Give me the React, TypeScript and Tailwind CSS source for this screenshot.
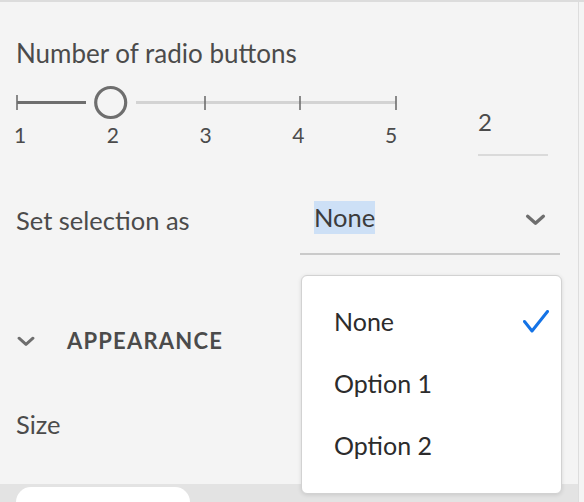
import { useState } from 'react';

const font = { fontFamily: 'Lato, "Open Sans", sans-serif' };

const Chevron = ({ className }: { className?: string }) => (
  <svg viewBox="0 0 22 13" className={className} fill="none">
    <path d="M2.5 2.5 L11 10 L19.5 2.5" stroke="#6e6e6e" strokeWidth="3.6" strokeLinecap="round" strokeLinejoin="round" />
  </svg>
);

const Slider = () => (
  <div className="w-[384px]">
    <svg width="384" height="30" className="overflow-visible block">
      <line x1="1" y1="7" x2="1" y2="22" stroke="#6e6e6e" strokeWidth="1.6" />
      <line x1="1" y1="14.5" x2="70" y2="14.5" stroke="#6e6e6e" strokeWidth="3" />
      <circle cx="94.7" cy="14.5" r="15" fill="none" stroke="#6e6e6e" strokeWidth="3.2" />
      <line x1="120" y1="14.5" x2="380" y2="14.5" stroke="#d3d3d3" strokeWidth="3" />
      <line x1="189" y1="8" x2="189" y2="22" stroke="#6e6e6e" strokeWidth="1.6" />
      <line x1="284" y1="8" x2="284" y2="22" stroke="#6e6e6e" strokeWidth="1.6" />
      <line x1="380" y1="8" x2="380" y2="22" stroke="#6e6e6e" strokeWidth="1.6" />
    </svg>
    <div className="mt-[4px] -ml-[2px] w-[383px] flex justify-between text-[21px] leading-[25px] text-[#4b4b4b]">
      {[1, 2, 3, 4, 5].map((n) => (
        <span key={n} className="w-[12px] text-center">{n}</span>
      ))}
    </div>
  </div>
);

const options = ['None', 'Option 1', 'Option 2'];

export default function App() {
  const [selected, setSelected] = useState('None');

  return (
    <div style={font} className="relative w-[584px] h-[502px] overflow-hidden bg-[#f4f4f4] border-t-2 border-[#dcdcdc]">
      <div className="w-[579px] h-full border-r border-[#dddddd] flex flex-col">
        {/* Field section */}
        <div className="px-4">
          <p className="mt-[36px] text-[26px] leading-[30px] text-[#4b4b4b]">Number of radio buttons</p>

          <div className="mt-[20px] flex items-start">
            <Slider />
            <div className="ml-[78px] mt-[19px] w-[70px] pb-[17px] border-b-2 border-[#dadada]">
              <span className="text-[24px] leading-[29px] text-[#4b4b4b]">2</span>
            </div>
          </div>

          <div className="mt-[35px] flex items-start">
            <p className="w-[284px] mt-[14px] text-[25.5px] leading-[30px] text-[#4b4b4b]">Set selection as</p>
            <div className="w-[260px] flex items-start justify-between pl-[14px] pr-[14px] pt-[10px] pb-[19px] border-b-2 border-[#cacaca]">
              <span className="inline-block h-[33px] leading-[33px] bg-[#cde0f6] text-[25.5px] text-[#3c3c3c]">{selected}</span>
              <Chevron className="w-[21px] h-[12px] mt-[13px]" />
            </div>
          </div>
        </div>

        <div className="mt-[31px] h-[3px] bg-[#e2e2e2]" />

        {/* Appearance section */}
        <div className="px-4">
          <div className="mt-[42px] flex items-center">
            <Chevron className="w-[18px] h-[11px] ml-[1px]" />
            <span className="ml-[32px] text-[22px] leading-[26px] font-bold tracking-[1.2px] text-[#4b4b4b]">APPEARANCE</span>
          </div>
          <p className="mt-[55px] text-[25.5px] leading-[30px] text-[#4b4b4b]">Size</p>
        </div>

        <div className="mt-[45px] flex-1 bg-[#e3e3e3] pt-[3px] pl-4">
          <div className="w-[174px] h-[30px] rounded-[16px] bg-white" />
        </div>
      </div>

      {/* Open dropdown menu */}
      <div className="absolute left-[301px] top-[273px] w-[261px] pt-[14px] pb-[17px] bg-white border border-[#d2d2d2] rounded-[6px] shadow-[0_1px_4px_rgba(0,0,0,0.12)]">
        {options.map((o) => (
          <button
            key={o}
            onClick={() => setSelected(o)}
            className="w-full h-[62px] flex items-center justify-between pl-[32px] pr-[12px] text-left text-[25px] leading-[30px] text-[#2c2c2c]"
          >
            <span>{o}</span>
            {selected === o && (
              <svg width="26" height="23" viewBox="0 0 26 23" fill="none">
                <path d="M1.5 11.5 L9 21 L24.5 1.5" stroke="#1473e6" strokeWidth="3" strokeLinecap="round" strokeLinejoin="round" />
              </svg>
            )}
          </button>
        ))}
      </div>
    </div>
  );
}
